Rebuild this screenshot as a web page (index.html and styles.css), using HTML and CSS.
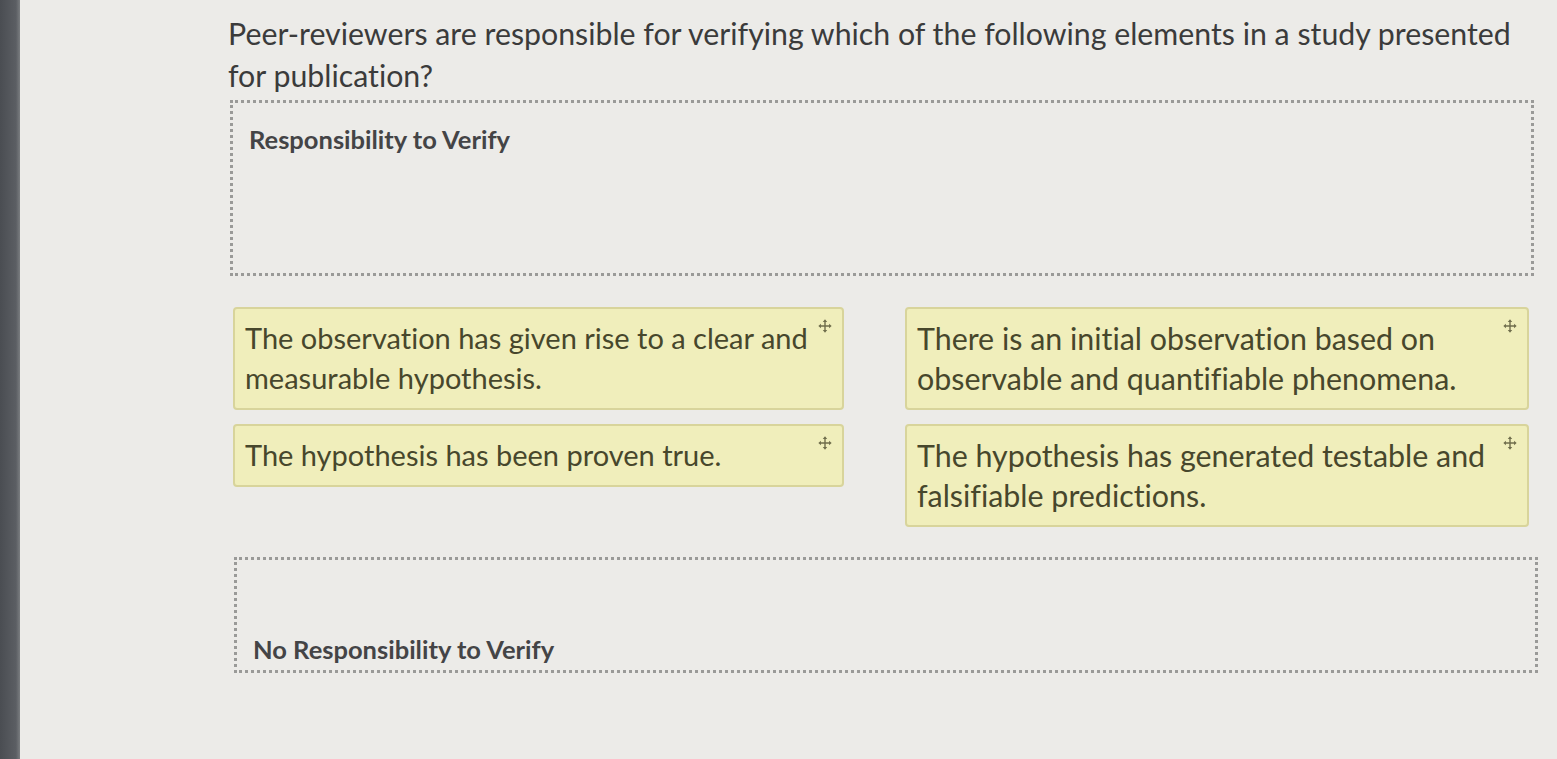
FILE: index.html
```html
<!DOCTYPE html>
<html lang="en">
<head>
<meta charset="utf-8">
<title>Peer review sorting</title>
<link rel="stylesheet" href="styles.css">
</head>
<body>
<div class="screen">
  <div class="bezel"></div>
  <main class="content">
    <h1 class="question">Peer-reviewers are responsible for verifying which of the following elements in a study presented for publication?</h1>

    <section class="zone zone-top">
      <div class="zone-label">Responsibility to Verify</div>
    </section>

    <div class="cards">
      <div class="card">
        <span class="card-text">The observation has given rise to a clear and measurable hypothesis.</span>
        <svg class="move" viewBox="0 0 12 12"><path d="M6 0.3L4.1 2.5H5.4V5.4H2.5V4.1L0.3 6L2.5 7.9V6.6H5.4V9.5H4.1L6 11.7L7.9 9.5H6.6V6.6H9.5V7.9L11.7 6L9.5 4.1V5.4H6.6V2.5H7.9Z"/></svg>
      </div>
      <div class="card card-right">
        <span class="card-text">There is an initial observation based on observable and quantifiable phenomena.</span>
        <svg class="move" viewBox="0 0 12 12"><path d="M6 0.3L4.1 2.5H5.4V5.4H2.5V4.1L0.3 6L2.5 7.9V6.6H5.4V9.5H4.1L6 11.7L7.9 9.5H6.6V6.6H9.5V7.9L11.7 6L9.5 4.1V5.4H6.6V2.5H7.9Z"/></svg>
      </div>
      <div class="card">
        <span class="card-text">The hypothesis has been proven true.</span>
        <svg class="move" viewBox="0 0 12 12"><path d="M6 0.3L4.1 2.5H5.4V5.4H2.5V4.1L0.3 6L2.5 7.9V6.6H5.4V9.5H4.1L6 11.7L7.9 9.5H6.6V6.6H9.5V7.9L11.7 6L9.5 4.1V5.4H6.6V2.5H7.9Z"/></svg>
      </div>
      <div class="card card-right">
        <span class="card-text">The hypothesis has generated testable and falsifiable predictions.</span>
        <svg class="move" viewBox="0 0 12 12"><path d="M6 0.3L4.1 2.5H5.4V5.4H2.5V4.1L0.3 6L2.5 7.9V6.6H5.4V9.5H4.1L6 11.7L7.9 9.5H6.6V6.6H9.5V7.9L11.7 6L9.5 4.1V5.4H6.6V2.5H7.9Z"/></svg>
      </div>
    </div>

    <section class="zone zone-bottom">
      <div class="zone-label">No Responsibility to Verify</div>
    </section>
  </main>
</div>
</body>
</html>
```

FILE: styles.css
```css
html, body {
  margin: 0;
  padding: 0;
  height: 100%;
}

body {
  background: #ecebe8;
  font-family: "Lato", "Open Sans", sans-serif;
  font-variant-ligatures: none;
  color: #3a3a3a;
  overflow: hidden;
}

.screen {
  display: flex;
  min-height: 759px;
}

.bezel {
  width: 20px;
  flex: none;
  background: linear-gradient(to right, #4a4d52, #5b5e63 80%, #7a7d80);
}

.content {
  flex: 1;
  padding: 12px 0 0 208px;
  display: flex;
  flex-direction: column;
}

.question {
  margin: 0;
  font-size: 30.3px;
  font-weight: 400;
  line-height: 42px;
  color: #3b3b3b;
  width: 1312px;
}

.zone {
  border: 3px dotted #9a9a98;
  display: flex;
  flex-direction: column;
}

.zone-top {
  margin-top: 4px;
  margin-left: 2px;
  margin-right: 23px;
  height: 176px;
  padding: 21px 0 0 16px;
  box-sizing: border-box;
}

.zone-label {
  font-size: 25.5px;
  font-weight: 700;
  color: #444446;
}

.cards {
  margin-top: 31px;
  margin-left: 5px;
  margin-right: 28px;
  display: grid;
  grid-template-columns: 610fr 623fr;
  column-gap: 61px;
  row-gap: 14px;
  align-items: start;
}

.card {
  position: relative;
  background: #f0eebb;
  border: 2px solid #d8d49b;
  border-radius: 4px;
  padding: 9px 26px 10px 10px;
  font-size: 29px;
  line-height: 40px;
  color: #47472c;
}

.card-right {
  font-size: 30.4px;
}

.move {
  position: absolute;
  top: 10px;
  right: 10px;
  width: 14px;
  height: 14px;
  fill: #6f6d4c;
}

.zone-bottom {
  margin-top: 30px;
  margin-left: 6px;
  margin-right: 19px;
  height: 116px;
  box-sizing: border-box;
  justify-content: flex-end;
  padding: 0 0 6px 16px;
}
```
